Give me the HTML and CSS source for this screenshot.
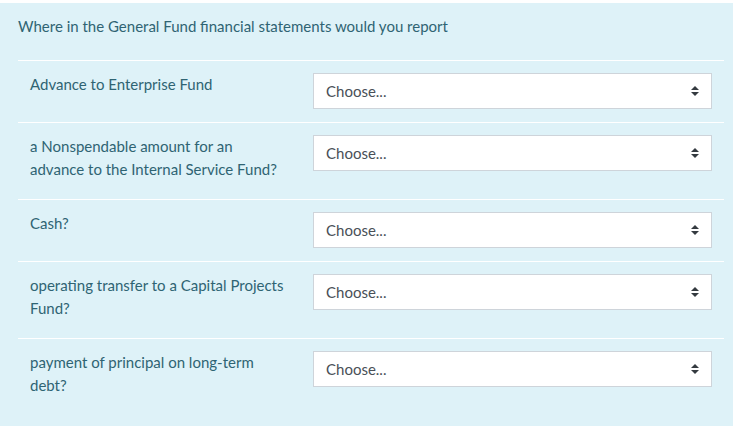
FILE: index.html
```html
<!DOCTYPE html>
<html lang="en">
<head>
<meta charset="utf-8">
<title>Question</title>
<link rel="stylesheet" href="styles.css">
</head>
<body>
<div class="formulation">
  <div class="qtext">Where in the General Fund financial statements would you report</div>
  <div class="answers">
    <div class="row">
      <div class="label">Advance to Enterprise Fund</div>
      <div class="select"><span>Choose...</span><svg class="arrow" width="8" height="10" viewBox="0 0 4 5"><path fill="#343a40" d="M2 0L0 2h4zm0 5L0 3h4z"/></svg></div>
    </div>
    <div class="row">
      <div class="label">a Nonspendable amount for an advance to the Internal Service Fund?</div>
      <div class="select"><span>Choose...</span><svg class="arrow" width="8" height="10" viewBox="0 0 4 5"><path fill="#343a40" d="M2 0L0 2h4zm0 5L0 3h4z"/></svg></div>
    </div>
    <div class="row">
      <div class="label">Cash?</div>
      <div class="select"><span>Choose...</span><svg class="arrow" width="8" height="10" viewBox="0 0 4 5"><path fill="#343a40" d="M2 0L0 2h4zm0 5L0 3h4z"/></svg></div>
    </div>
    <div class="row">
      <div class="label">operating transfer to a Capital Projects Fund?</div>
      <div class="select"><span>Choose...</span><svg class="arrow" width="8" height="10" viewBox="0 0 4 5"><path fill="#343a40" d="M2 0L0 2h4zm0 5L0 3h4z"/></svg></div>
    </div>
    <div class="row">
      <div class="label">payment of principal on long-term debt?</div>
      <div class="select"><span>Choose...</span><svg class="arrow" width="8" height="10" viewBox="0 0 4 5"><path fill="#343a40" d="M2 0L0 2h4zm0 5L0 3h4z"/></svg></div>
    </div>
  </div>
</div>
</body>
</html>
```

FILE: styles.css
```css
html, body {
  margin: 0;
  padding: 0;
  background: #ffffff;
  height: 100%;
}
body {
  font-family: "Lato", "Liberation Sans", sans-serif;
  font-size: 15px;
  line-height: 22.5px;
  padding: 3px 1px 0 0;
  box-sizing: border-box;
}
.formulation {
  background: #def2f8;
  color: #2f6473;
  padding: 12px 9px 0 18px;
  min-height: 423px;
  box-sizing: border-box;
}
.qtext {
  margin-bottom: 22.5px;
}
.row {
  border-top: 1px solid #ffffff;
  display: grid;
  grid-template-columns: 260px 1fr;
  column-gap: 23px;
  padding: 12px 12px 4px 12px;
  align-items: start;
}
.label {
  margin-bottom: 15px;
}
.select {
  height: 36px;
  box-sizing: border-box;
  background: #ffffff;
  border: 1px solid #ced4da;
  color: #495057;
  display: flex;
  align-items: center;
  justify-content: space-between;
  padding: 0 12px 0 12px;
  margin-bottom: 9px;
}
.arrow {
  display: block;
}
```
